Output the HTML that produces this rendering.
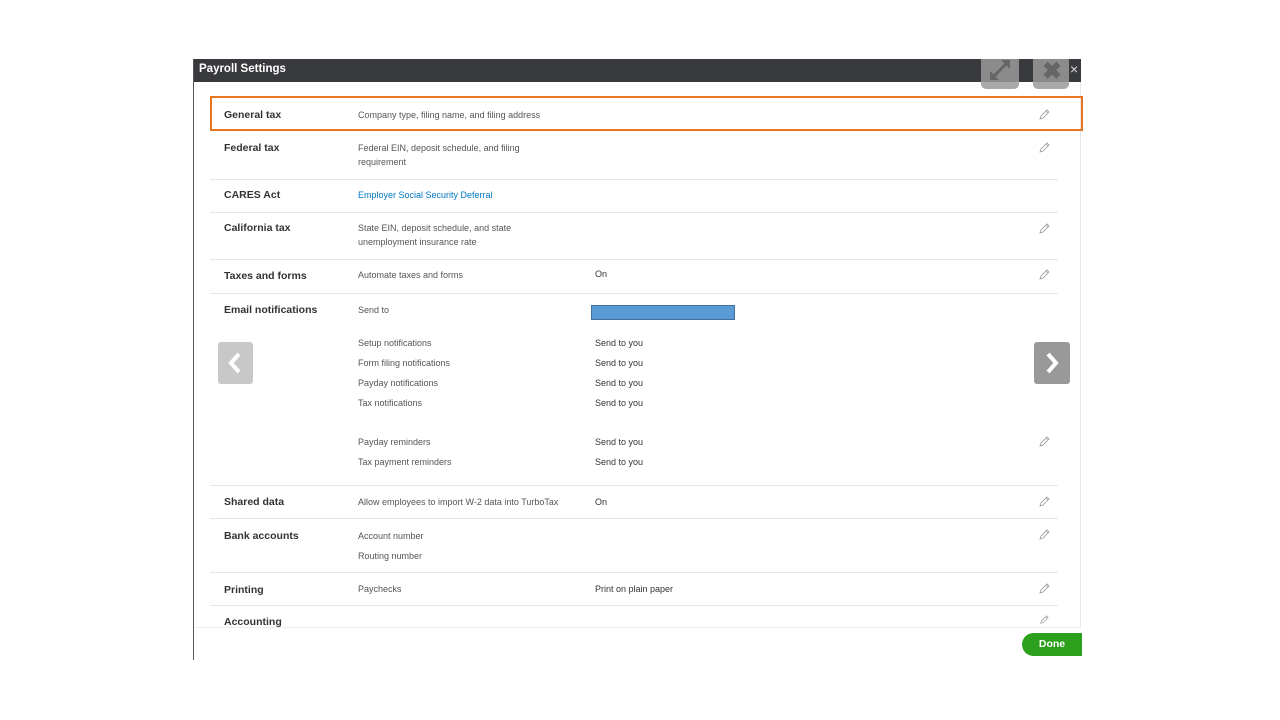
<!DOCTYPE html>
<html><head><style>
body{margin:0;width:1280px;height:720px;background:#fff;position:relative;font-family:"Liberation Sans",sans-serif;overflow:hidden}
.a{position:absolute;white-space:nowrap}
.l{font-size:10.5px;font-weight:bold;color:#333;left:224px}
.d{font-size:9px;color:#555;left:358px;line-height:14px}
.v{font-size:9px;color:#333;left:595px}
.hr{position:absolute;left:210px;width:848px;height:1px;background:#e6e6e6}
.p{position:absolute;left:1038px;width:12px;height:12px}
</style></head><body>
<div class="a" style="left:193px;top:59px;width:1px;height:601px;background:#555"></div>
<div class="a" style="left:194px;top:59px;width:887px;height:23px;background:#393a3d"></div>
<div class="a" style="left:199px;top:63px;color:#fff;font-size:11.5px;font-weight:bold">Payroll Settings</div>
<div class="a" style="left:981px;top:59px;width:38px;height:30px;background:#9a9a9a;border-radius:0 0 5px 5px;opacity:.85"></div>
<div class="a" style="left:1033px;top:59px;width:36px;height:30px;background:#9a9a9a;border-radius:0 0 5px 5px;opacity:.85"></div>
<svg class="a" style="left:988px;top:59px" width="24" height="22"><path d="M5 18L19 4" stroke="#666" stroke-width="3" fill="none"/><path d="M2 21v-9l9 9z M22 1v9l-9-9z" fill="#666"/></svg>
<div class="a" style="left:1042px;top:57px;color:#666;font-size:24px;font-weight:bold">✖</div>
<div class="a" style="left:1070px;top:61px;color:#ddd;font-size:14px">×</div>
<div class="a" style="left:1080px;top:82px;width:1px;height:545px;background:#e8e8e8"></div>
<div class="a" style="left:194px;top:627px;width:887px;height:1px;background:#eee"></div>
<div class="a" style="left:210px;top:96px;height:35px;border:2px solid #e8761f;box-sizing:border-box;width:873px"></div>

<div class="a l" style="top:109px">General tax</div><div class="a d" style="top:108px">Company type, filing name, and filing address</div>
<div class="a l" style="top:142px">Federal tax</div><div class="a d" style="top:141px">Federal EIN, deposit schedule, and filing<br>requirement</div>
<div class="hr" style="top:179px"></div>
<div class="a l" style="top:189px">CARES Act</div><div class="a d" style="top:188px;color:#0077c5">Employer Social Security Deferral</div>
<div class="hr" style="top:212px"></div>
<div class="a l" style="top:222px">California tax</div><div class="a d" style="top:221px">State EIN, deposit schedule, and state<br>unemployment insurance rate</div>
<div class="hr" style="top:259px"></div>
<div class="a l" style="top:270px">Taxes and forms</div><div class="a d" style="top:268px">Automate taxes and forms</div><div class="a v" style="top:269px">On</div>
<div class="hr" style="top:293px"></div>
<div class="a l" style="top:304px">Email notifications</div><div class="a d" style="top:303px">Send to</div>
<div class="a" style="left:591px;top:305px;width:142px;height:13px;background:#5b9bd5;border:1px solid #41719c"></div>
<div class="a d" style="top:336px">Setup notifications</div><div class="a v" style="top:338px">Send to you</div>
<div class="a d" style="top:356px">Form filing notifications</div><div class="a v" style="top:358px">Send to you</div>
<div class="a d" style="top:376px">Payday notifications</div><div class="a v" style="top:378px">Send to you</div>
<div class="a d" style="top:396px">Tax notifications</div><div class="a v" style="top:398px">Send to you</div>
<div class="a d" style="top:435px">Payday reminders</div><div class="a v" style="top:437px">Send to you</div>
<div class="a d" style="top:455px">Tax payment reminders</div><div class="a v" style="top:457px">Send to you</div>
<div class="hr" style="top:485px"></div>
<div class="a l" style="top:496px">Shared data</div><div class="a d" style="top:495px">Allow employees to import W-2 data into TurboTax</div><div class="a v" style="top:497px">On</div>
<div class="hr" style="top:518px"></div>
<div class="a l" style="top:530px">Bank accounts</div><div class="a d" style="top:529px">Account number</div><div class="a d" style="top:549px">Routing number</div>
<div class="hr" style="top:572px"></div>
<div class="a l" style="top:584px">Printing</div><div class="a d" style="top:582px">Paychecks</div><div class="a v" style="top:584px">Print on plain paper</div>
<div class="hr" style="top:605px"></div>
<div class="a" style="left:210px;top:612px;width:860px;height:15px;overflow:hidden"><div class="a l" style="left:14px;top:4px">Accounting</div></div>

<div class="a" style="left:218px;top:342px;width:35px;height:42px;background:#c8c8c8;border-radius:3px"></div>
<svg class="a" style="left:226px;top:352px" width="18" height="22"><path d="M13 2L5 11l8 9" stroke="#fff" stroke-width="4" fill="none"/></svg>
<div class="a" style="left:1034px;top:342px;width:36px;height:42px;background:#999;border-radius:3px"></div>
<svg class="a" style="left:1043px;top:352px" width="18" height="22"><path d="M5 2l8 9-8 9" stroke="#fff" stroke-width="4" fill="none"/></svg>

<svg width="0" height="0" style="position:absolute"><defs><symbol id="pen" viewBox="0 0 12 12"><path d="M2 10l1-3 6-6 2 2-6 6z M8 2l2 2" stroke="#999" stroke-width="0.8" fill="none"/></symbol></defs></svg>
<svg class="p" style="top:109px"><use href="#pen"/></svg>
<svg class="p" style="top:142px"><use href="#pen"/></svg>
<svg class="p" style="top:223px"><use href="#pen"/></svg>
<svg class="p" style="top:269px"><use href="#pen"/></svg>
<svg class="p" style="top:436px"><use href="#pen"/></svg>
<svg class="p" style="top:496px"><use href="#pen"/></svg>
<svg class="p" style="top:529px"><use href="#pen"/></svg>
<svg class="p" style="top:583px"><use href="#pen"/></svg>
<svg class="p" style="top:615px;height:10px"><use href="#pen"/></svg>

<div class="a" style="left:1022px;top:633px;width:60px;height:23px;background:#2ca01c;border-radius:12px 0 0 12px;color:#fff;font-size:10.5px;font-weight:bold;text-align:center;line-height:23px">Done</div>
</body></html>
